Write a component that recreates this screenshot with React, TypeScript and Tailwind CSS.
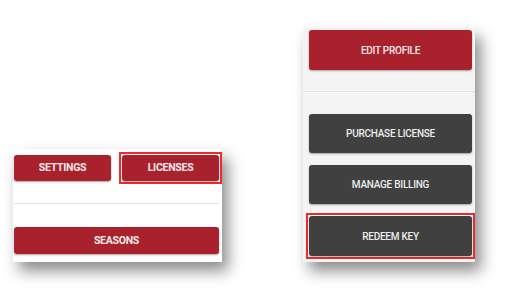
import React from "react";

const font = { fontFamily: "Roboto, 'Liberation Sans', sans-serif" };

function Btn({
  label,
  dark,
  className,
}: {
  label: string;
  dark?: boolean;
  className?: string;
}) {
  return (
    <div
      className={[
        "flex items-center justify-center rounded-[3px] uppercase tracking-tight shadow-[0_1px_2px_rgba(0,0,0,0.35)]",
        dark
          ? "bg-[#404040] text-[#ececec]"
          : "bg-[#a9212c] text-[#f6eaea]",
        className ?? "",
      ].join(" ")}
    >
      {label}
    </div>
  );
}

// red highlight box drawn around a button
function Marked({ children, className }: { children: React.ReactNode; className?: string }) {
  return (
    <div className={"-m-[3px] border-2 border-[#ee2a2a] bg-white p-px " + (className ?? "")}>
      {children}
    </div>
  );
}

export default function App() {
  return (
    <div
      className="w-[506px] h-[289px] bg-white flex items-end pl-[13px] pb-[27px]"
      style={font}
    >
      {/* small card */}
      <div className="w-[209px] bg-white pt-[6px] pb-[8px] pl-[1px] pr-[3px] shadow-[6px_9px_14px_rgba(0,0,0,0.45)] text-[10.5px] font-bold">
        <div className="flex gap-[11px]">
          <Btn label="Settings" className="w-[97px] h-[26px]" />
          <Marked>
            <Btn label="Licenses" className="w-[97px] h-[26px]" />
          </Marked>
        </div>
        <div className="h-px bg-[#e4e4e4] mt-[22px] mb-[23px]" />
        <Btn label="Seasons" className="h-[27px]" />
      </div>

      {/* tall card */}
      <div className="ml-[81px] w-[172px] h-[234px] bg-[#f4f4f4] pt-[2px] pl-[6px] pr-[3px] shadow-[6px_9px_14px_rgba(0,0,0,0.45)] text-[10px] font-medium">
        <Btn label="Edit Profile" className="h-[40px]" />
        <div className="h-px bg-[#e2e2e2] -ml-[6px] -mr-[3px] mt-[21px] mb-[22px]" />
        <div className="flex flex-col gap-[12px]">
          <Btn label="Purchase License" dark className="h-[39px]" />
          <Btn label="Manage Billing" dark className="h-[39px]" />
          <Marked>
            <Btn label="Redeem Key" dark className="h-[40px]" />
          </Marked>
        </div>
      </div>
    </div>
  );
}
